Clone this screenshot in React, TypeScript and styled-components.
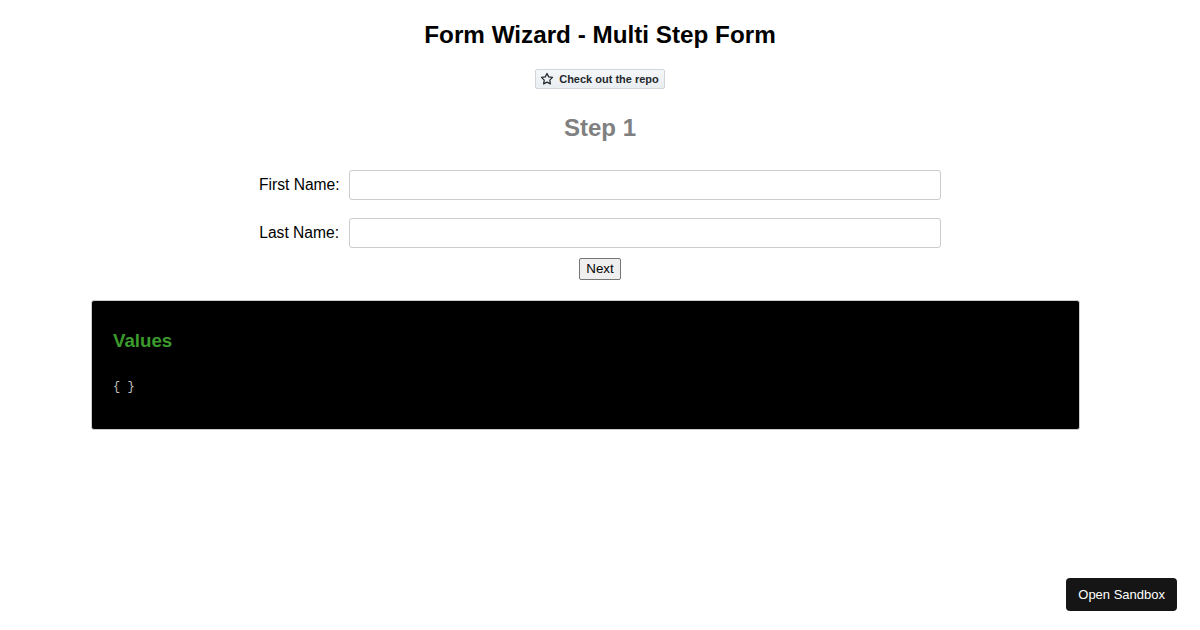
import React from 'react';
import styled, { createGlobalStyle } from 'styled-components';

const GlobalStyle = createGlobalStyle`
  html, body {
    margin: 0;
    padding: 0;
    background: #fff;
  }
  body {
    font-family: "Liberation Sans", Arial, Helvetica, sans-serif;
    color: #000;
  }
`;

const FIELDS = [
  { name: 'firstName', label: 'First Name:' },
  { name: 'lastName', label: 'Last Name:' },
];

const StarIcon = () => (
  <svg width="14" height="14" viewBox="0 0 16 16" fill="none" aria-hidden="true">
    <path
      d="M8 1.6l1.95 3.95 4.36.64-3.16 3.07.75 4.34L8 11.55l-3.9 2.05.75-4.34L1.69 6.19l4.36-.64L8 1.6z"
      stroke="#24292e"
      strokeWidth="1.4"
      strokeLinejoin="round"
    />
  </svg>
);

const App = () => {
  return (
    <Page>
      <GlobalStyle />
      <Title>Form Wizard - Multi Step Form</Title>
      <RepoRow>
        <RepoButton href="#">
          <StarIcon />
          Check out the repo
        </RepoButton>
      </RepoRow>
      <StepTitle>Step 1</StepTitle>
      <Form onSubmit={(e) => e.preventDefault()}>
        {FIELDS.map((f) => (
          <Row key={f.name}>
            <Label htmlFor={f.name}>{f.label}</Label>
            <Input id={f.name} name={f.name} type="text" />
          </Row>
        ))}
        <Buttons>
          <NextButton type="submit">Next</NextButton>
        </Buttons>
      </Form>
      <Values>
        <ValuesTitle>Values</ValuesTitle>
        <Code>{'{ }'}</Code>
      </Values>
      <SandboxButton>Open Sandbox</SandboxButton>
    </Page>
  );
};

export default App;

const Page = styled.div`
  min-height: 630px;
  padding-top: 20px;
  box-sizing: border-box;
`;

const Title = styled.h1`
  margin: 0;
  text-align: center;
  font-size: 24.25px;
  font-weight: 700;
  line-height: 30px;
`;

const RepoRow = styled.div`
  display: flex;
  justify-content: center;
  margin-top: 19px;
`;

const RepoButton = styled.a`
  display: inline-flex;
  align-items: center;
  gap: 5px;
  height: 20px;
  box-sizing: border-box;
  padding: 0 5px 0 4px;
  font-size: 11px;
  font-weight: 700;
  color: #24292e;
  text-decoration: none;
  background: linear-gradient(#f5f7f9, #e9eef2);
  border: 1px solid #d1d5da;
  border-radius: 2px;
`;

const StepTitle = styled.h2`
  margin: 24px 0 0;
  text-align: center;
  font-size: 24px;
  font-weight: 700;
  line-height: 30px;
  color: #808080;
`;

const Form = styled.form`
  width: 682px;
  margin: 27px auto 0;
`;

const Row = styled.div`
  display: flex;
  align-items: center;

  & + & {
    margin-top: 18px;
  }
`;

const Label = styled.label`
  width: 80px;
  margin-right: 10px;
  text-align: right;
  font-size: 15.6px;
  white-space: nowrap;
`;

const Input = styled.input`
  width: 592px;
  height: 30px;
  box-sizing: border-box;
  padding: 0 8px;
  border: 1px solid #ccc;
  border-radius: 3px;
  font-size: 16px;
  outline: none;
`;

const Buttons = styled.div`
  display: flex;
  justify-content: center;
  margin-top: 10px;
`;

const NextButton = styled.button`
  box-sizing: border-box;
  height: 22px;
  padding: 0 6px;
  font-family: "Liberation Sans", Arial, sans-serif;
  font-size: 13.33px;
  line-height: 20px;
  color: #000;
  background: #efefef;
  border: 1px solid #767676;
  border-radius: 2px;
`;

const Values = styled.div`
  width: 989px;
  height: 130px;
  box-sizing: border-box;
  margin: 20px 0 0 91px;
  padding: 28px 21px;
  background: #000;
  border: 1px solid #ccc;
  border-radius: 3px;
`;

const ValuesTitle = styled.h3`
  margin: 0;
  font-size: 18.72px;
  font-weight: 700;
  line-height: 24px;
  color: #3b9b2c;
`;

const Code = styled.pre`
  margin: 26px 0 0;
  font-family: "Liberation Mono", "DejaVu Sans Mono", monospace;
  font-size: 12px;
  line-height: 16px;
  color: #c4c4c4;
`;

const SandboxButton = styled.button`
  position: fixed;
  right: 23px;
  bottom: 19px;
  height: 33px;
  padding: 0 12px;
  font-family: "Liberation Sans", Arial, sans-serif;
  font-size: 13px;
  color: #fff;
  background: #151515;
  border: none;
  border-radius: 4px;
`;
